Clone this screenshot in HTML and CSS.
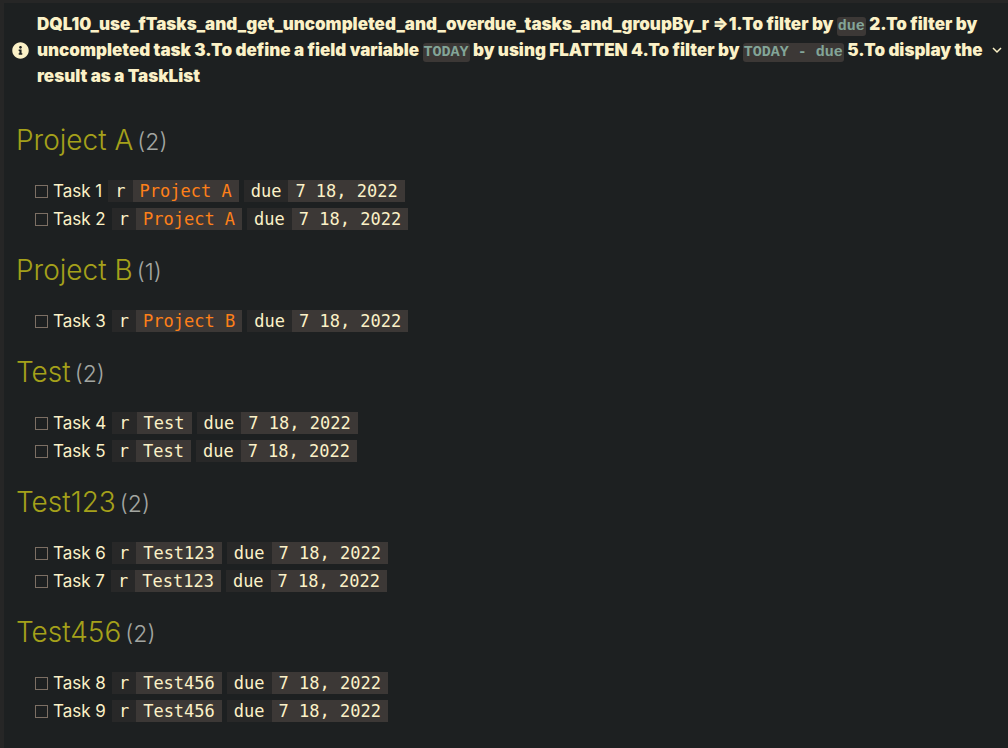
FILE: index.html
```html
<!DOCTYPE html>
<html lang="en">

<head>
    <meta charset="UTF-8">
    <meta name="viewport" content="width=device-width, initial-scale=1.0">
    <title>DQL10 TaskList</title>
    <link rel="stylesheet" href="styles.css">
</head>

<body>
    <div class="callout">
        <!-- Title -->
        <div class="callout-header">
            <svg class="callout-icon" viewBox="0 0 512 512" aria-hidden="true">
                <path fill="currentColor" d="M256 8C119 8 8 119 8 256s111 248 248 248 248-111 248-248S393 8 256 8zm0 110c23 0 42 19 42 42s-19 42-42 42-42-19-42-42 19-42 42-42zm56 254c0 7-5 12-12 12h-88c-7 0-12-5-12-12v-24c0-7 5-12 12-12h12v-64h-12c-7 0-12-5-12-12v-24c0-7 5-12 12-12h64c7 0 12 5 12 12v100h12c7 0 12 5 12 12v24z" />
            </svg>
            <div class="callout-title">DQL10_use_fTasks_and_get_uncompleted_and_overdue_tasks_and_groupBy_r =&gt;1.To filter by <code>due</code> 2.To filter by uncompleted task 3.To define a field variable <code>TODAY</code> by using FLATTEN 4.To filter by <code>TODAY - due</code> 5.To display the result as a TaskList</div>
            <button type="button" class="callout-fold" aria-label="Collapse">
                <svg viewBox="0 0 10 10" aria-hidden="true">
                    <path d="M1 3l4 4 4-4" fill="none" stroke="currentColor" stroke-width="1.5" />
                </svg>
            </button>
        </div>

        <!-- Task groups -->
        <div class="callout-content">
            <h4>Project A<span class="count">(2)</span></h4>
            <ul class="task-list">
                <li>
                    <input type="checkbox" id="task1"><label for="task1">Task 1</label>
                    <span class="field"><span class="key">r</span><a href="#" class="value">Project A</a></span>
                    <span class="field"><span class="key">due</span><span class="value">7 18, 2022</span></span>
                </li>
                <li>
                    <input type="checkbox" id="task2"><label for="task2">Task 2</label>
                    <span class="field"><span class="key">r</span><a href="#" class="value">Project A</a></span>
                    <span class="field"><span class="key">due</span><span class="value">7 18, 2022</span></span>
                </li>
            </ul>

            <h4>Project B<span class="count">(1)</span></h4>
            <ul class="task-list">
                <li>
                    <input type="checkbox" id="task3"><label for="task3">Task 3</label>
                    <span class="field"><span class="key">r</span><a href="#" class="value">Project B</a></span>
                    <span class="field"><span class="key">due</span><span class="value">7 18, 2022</span></span>
                </li>
            </ul>

            <h4>Test<span class="count">(2)</span></h4>
            <ul class="task-list">
                <li>
                    <input type="checkbox" id="task4"><label for="task4">Task 4</label>
                    <span class="field"><span class="key">r</span><span class="value">Test</span></span>
                    <span class="field"><span class="key">due</span><span class="value">7 18, 2022</span></span>
                </li>
                <li>
                    <input type="checkbox" id="task5"><label for="task5">Task 5</label>
                    <span class="field"><span class="key">r</span><span class="value">Test</span></span>
                    <span class="field"><span class="key">due</span><span class="value">7 18, 2022</span></span>
                </li>
            </ul>

            <h4>Test123<span class="count">(2)</span></h4>
            <ul class="task-list">
                <li>
                    <input type="checkbox" id="task6"><label for="task6">Task 6</label>
                    <span class="field"><span class="key">r</span><span class="value">Test123</span></span>
                    <span class="field"><span class="key">due</span><span class="value">7 18, 2022</span></span>
                </li>
                <li>
                    <input type="checkbox" id="task7"><label for="task7">Task 7</label>
                    <span class="field"><span class="key">r</span><span class="value">Test123</span></span>
                    <span class="field"><span class="key">due</span><span class="value">7 18, 2022</span></span>
                </li>
            </ul>

            <h4>Test456<span class="count">(2)</span></h4>
            <ul class="task-list">
                <li>
                    <input type="checkbox" id="task8"><label for="task8">Task 8</label>
                    <span class="field"><span class="key">r</span><span class="value">Test456</span></span>
                    <span class="field"><span class="key">due</span><span class="value">7 18, 2022</span></span>
                </li>
                <li>
                    <input type="checkbox" id="task9"><label for="task9">Task 9</label>
                    <span class="field"><span class="key">r</span><span class="value">Test456</span></span>
                    <span class="field"><span class="key">due</span><span class="value">7 18, 2022</span></span>
                </li>
            </ul>
        </div>
    </div>
</body>

</html>
```
FILE: styles.css
```css
/* General */
* {
    box-sizing: border-box;
}

body {
    font-family: 'Inter', sans-serif;
    font-size: 17px;
    margin: 0;
    background: #1d2021;
    color: #fbf1c7;
}

.callout {
    min-height: 100vh;
    border-top: 3px solid #262626;
    border-left: 4px solid #262626;
    padding: 8px 6px 8px 8px;
}

/* Title */
.callout-header {
    display: flex;
    align-items: center;
    gap: 8px;
    line-height: 26px;
}

.callout-icon {
    width: 17px;
    height: 17px;
    flex: none;
}

.callout-title {
    flex: 1;
    font-weight: 900;
}

.callout-title code {
    font-family: 'Liberation Mono', monospace;
    font-size: 15px;
    line-height: 18px;
    padding: 1px;
    border-radius: 3px;
    background: #3c3836;
    color: #83a598;
}

.callout-fold {
    display: flex;
    width: 10px;
    padding: 0;
    border: none;
    background: none;
    color: inherit;
    cursor: pointer;
}

.callout-fold svg {
    width: 10px;
    height: 10px;
}

/* Groups */
.callout-content {
    padding: 34px 4px 0;
}

h4 {
    margin: 0 0 20px;
    font-size: 28px;
    font-weight: 350;
    line-height: 34px;
    color: #a5a11a;
}

.count {
    margin-left: 4px;
    font-size: 23px;
    line-height: 24px;
    color: #a3a6a1;
}

.task-list {
    list-style: none;
    margin: 0 0 20px;
    padding: 0 0 0 19px;
}

.task-list li {
    display: flex;
    align-items: center;
    height: 28px;
}

.task-list input {
    appearance: none;
    width: 13px;
    height: 13px;
    margin: 0 5px 0 0;
    border: 1px solid #7c6f64;
}

/* Inline fields */
.field {
    display: flex;
    margin-left: 6px;
    font-family: 'DejaVu Sans Mono', monospace;
    line-height: 22px;
}

.field + .field {
    margin-left: 5px;
}

.key,
.value {
    padding: 0 7px;
}

.key {
    background: #282828;
}

.value {
    background: #3c3836;
}

a.value {
    color: #fe8019;
    text-decoration: none;
}
```
